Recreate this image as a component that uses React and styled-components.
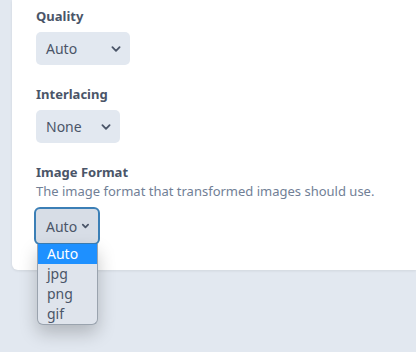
import React from "react";
import styled, { createGlobalStyle } from "styled-components";

const Global = createGlobalStyle`
  body {
    margin: 0;
    background: #e2e8f0;
    font-family: "Noto Sans", "Open Sans", sans-serif;
  }
`;

const Page = styled.div`
  width: 416px;
  height: 352px;
  padding-left: 12px;
  box-sizing: border-box;
  overflow: hidden;
`;

const Card = styled.div`
  background: #fff;
  border-bottom-left-radius: 6px;
  box-shadow: 0 1px 3px rgba(0, 0, 0, 0.08);
  padding: 7px 24px 25px 24px;
  display: flex;
  flex-direction: column;
  gap: 20px;
`;

const Field = styled.div`
  display: flex;
  flex-direction: column;
`;

const Label = styled.div`
  font-size: 13px;
  font-weight: 700;
  line-height: 18px;
  color: #4a5568;
`;

const Help = styled.div`
  font-size: 13px;
  line-height: 20px;
  color: #718096;
`;

const SelectWrap = styled.div`
  position: relative;
  margin-top: ${(p) => (p.$tight ? "6px" : "7px")};
  align-self: flex-start;
`;

const Select = styled.div`
  box-sizing: border-box;
  width: ${(p) => p.$w}px;
  height: 33px;
  display: flex;
  align-items: center;
  justify-content: space-between;
  padding: 0 8px 0 10px;
  border-radius: 5px;
  background: #e2e8f0;
  color: #4a5568;
  font-size: 14px;
  ${(p) =>
    p.$focus &&
    `
    height: 38px;
    margin-left: -2px;
    padding: 0 8px 0 10px;
    border: 2px solid #3b7fb6;
    border-radius: 6px;
    background: #d7dde6;
    justify-content: flex-start;
    gap: 4px;
  `}
`;

const Menu = styled.div`
  position: absolute;
  top: 37px;
  left: 1px;
  width: 61px;
  box-sizing: border-box;
  background: #dfe4ec;
  border: 1px solid #9aa3ae;
  border-top: none;
  border-radius: 0 0 6px 6px;
  box-shadow: 0 8px 18px rgba(0, 0, 0, 0.22);
  overflow: hidden;
`;

const Option = styled.div`
  height: 20px;
  line-height: 20px;
  padding-left: 9px;
  font-size: 14px;
  color: ${(p) => (p.$active ? "#fff" : "#4a5568")};
  background: ${(p) => (p.$active ? "#1e90ff" : "transparent")};
`;

function Chevron({ bold }) {
  return (
    <svg width="12" height="12" viewBox="0 0 20 20">
      <path d="M4 7l6 6 6-6" fill="none" stroke="#4a5568" strokeWidth={bold ? 4 : 3} strokeLinecap="round" strokeLinejoin="round" />
    </svg>
  );
}

export default function App() {
  return (
    <Page>
      <Global />
      <Card>
        <Field>
          <Label>Quality</Label>
          <SelectWrap>
            <Select $w={94}>
              Auto <Chevron />
            </Select>
          </SelectWrap>
        </Field>
        <Field>
          <Label>Interlacing</Label>
          <SelectWrap>
            <Select $w={84}>
              None <Chevron />
            </Select>
          </SelectWrap>
        </Field>
        <Field>
          <Label>Image Format</Label>
          <Help>The image format that transformed images should use.</Help>
          <SelectWrap $tight>
            <Select $w={66} $focus>
              Auto <Chevron bold />
            </Select>
            <Menu>
              {["Auto", "jpg", "png", "gif"].map((o, i) => (
                <Option key={o} $active={i === 0}>
                  {o}
                </Option>
              ))}
            </Menu>
          </SelectWrap>
        </Field>
      </Card>
    </Page>
  );
}
